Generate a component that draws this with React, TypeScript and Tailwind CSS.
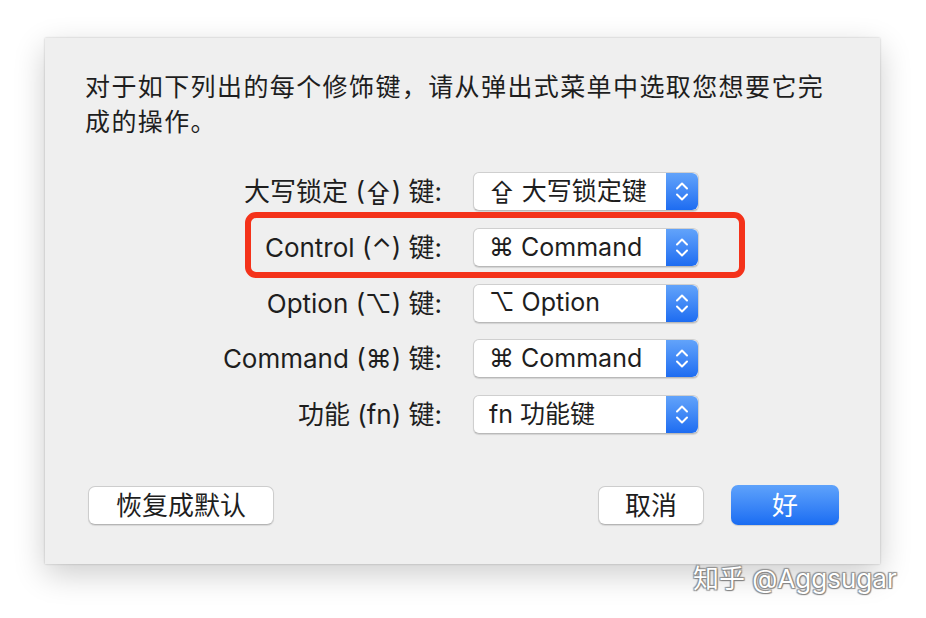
import React from "react";

const font = { fontFamily: 'Inter, "Noto Sans CJK SC", "DejaVu Sans", sans-serif' };

function Stepper() {
  return (
    <div className="flex h-full w-[32px] flex-col items-center justify-center gap-[3px] rounded-r-[6px] bg-gradient-to-b from-[#62a3fa] to-[#1d6cf1]">
      <svg width="14" height="9" viewBox="0 0 14 9" fill="none">
        <path d="M2 7.5 L7 2.5 L12 7.5" stroke="white" strokeWidth="2" strokeLinecap="round" strokeLinejoin="round" />
      </svg>
      <svg width="14" height="9" viewBox="0 0 14 9" fill="none">
        <path d="M2 1.5 L7 6.5 L12 1.5" stroke="white" strokeWidth="2" strokeLinecap="round" strokeLinejoin="round" />
      </svg>
    </div>
  );
}

function Popup({ children }: { children: React.ReactNode }) {
  return (
    <div className="ml-[31px] flex h-[39px] w-[226px] items-stretch rounded-[6px] border border-[#cfcfcf] border-b-[#b9b9b9] bg-white shadow-[0_1px_1px_rgba(0,0,0,0.12)]">
      <div className="flex flex-1 items-center whitespace-nowrap pl-[15px] text-[25px] text-[#1e1e1e]">{children}</div>
      <Stepper />
    </div>
  );
}

function Row({ label, value }: { label: React.ReactNode; value: React.ReactNode }) {
  return (
    <div className="flex h-[39px] items-center">
      <div className="w-[357px] whitespace-nowrap text-right text-[26px] text-[#1e1e1e]">{label}</div>
      <Popup>{value}</Popup>
    </div>
  );
}

export default function App() {
  return (
    <div className="relative h-[618px] w-[926px] overflow-hidden bg-white pt-[38px]" style={font}>
      <div className="ml-[45px] flex h-[526px] w-[835px] flex-col bg-[#efefef] pl-[40px] pr-[41px] pt-[32px] shadow-[0_10px_30px_rgba(0,0,0,0.2),0_0_2px_rgba(0,0,0,0.22)]">
        <p className="text-[25px] leading-[35px] tracking-[1.4px] text-[#1e1e1e]">
          对于如下列出的每个修饰键，请从弹出式菜单中选取您想要它完
          <br />
          成的操作。
        </p>
        <div className="mt-[32px] flex flex-col gap-[16.75px]">
          <Row label={<>大写锁定 (⇪) 键:</>} value={<>⇪ 大写锁定键</>} />
          <Row label={<>Control (⌃) 键:</>} value={<>⌘ Command</>} />
          <Row label={<>Option (⌥) 键:</>} value={<>⌥ Option</>} />
          <Row label={<>Command (⌘) 键:</>} value={<>⌘ Command</>} />
          <Row label={<>功能 (fn) 键:</>} value={<>fn 功能键</>} />
        </div>
        <div className="mt-[51px] flex items-center">
          <button className="ml-[3px] flex h-[39px] w-[186px] items-center justify-center rounded-[7px] border border-[#cdcdcd] border-b-[#b5b5b5] bg-white text-[26px] text-[#1e1e1e] shadow-[0_1px_1px_rgba(0,0,0,0.1)]">
            恢复成默认
          </button>
          <div className="flex-1" />
          <button className="flex h-[39px] w-[106px] items-center justify-center rounded-[7px] border border-[#cdcdcd] border-b-[#b5b5b5] bg-white text-[26px] text-[#1e1e1e] shadow-[0_1px_1px_rgba(0,0,0,0.1)]">
            取消
          </button>
          <button className="ml-[27px] flex h-[40px] w-[108px] items-center justify-center rounded-[7px] bg-gradient-to-b from-[#5ea2fb] to-[#196cf2] text-[26px] text-white shadow-[0_1px_1px_rgba(0,0,0,0.15)]">
            好
          </button>
        </div>
      </div>
      <div className="pointer-events-none absolute left-[245px] top-[212px] h-[66px] w-[500px] rounded-[11px] border-[6px] border-[#f4321a]" />
      <div
        className="absolute left-[693px] top-[559px] text-[26px] text-white"
        style={{ textShadow: "0 0 1px #666, 1px 1px 1px #888, -1px -1px 1px #999, 1px -1px 1px #999, -1px 1px 1px #999" }}
      >
        知乎 @Aggsugar
      </div>
    </div>
  );
}
